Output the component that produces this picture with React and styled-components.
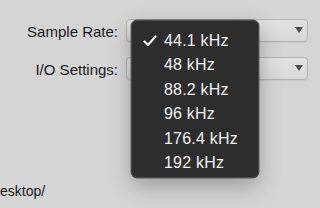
import React from "react";
import styled, { createGlobalStyle } from "styled-components";

const Global = createGlobalStyle`
  html, body { margin: 0; padding: 0; }
  body {
    background: #d5d5d5;
    font-family: "Liberation Sans", Arial, Helvetica, sans-serif;
    overflow: hidden;
  }
`;

const Page = styled.div`
  position: relative;
  width: 320px;
  height: 208px;
  box-sizing: border-box;
  padding: 19px 12px 0 0;
`;

const Form = styled.div`
  display: grid;
  grid-template-columns: 118px 1fr;
  column-gap: 8px;
  row-gap: 15px;
`;

const Label = styled.div`
  text-align: right;
  font-size: 15px;
  line-height: 23px;
  padding-top: 1px;
  height: 23px;
  box-sizing: border-box;
  color: #1a1a1a;
  white-space: nowrap;
`;

const Select = styled.div`
  height: 23px;
  box-sizing: border-box;
  border: 1px solid #b3b3b3;
  border-radius: 4px;
  background: linear-gradient(#e2e2e2, #d8d8d8);
  box-shadow: 0 1px 0 rgba(0, 0, 0, 0.06);
  display: flex;
  align-items: center;
  justify-content: flex-end;
  padding-right: 4px;
`;

const Arrow = styled.span`
  width: 0;
  height: 0;
  border-left: 4.5px solid transparent;
  border-right: 4.5px solid transparent;
  border-top: 6px solid #4d4d4d;
  margin-bottom: 2px;
`;

const PathText = styled.div`
  margin-top: 103px;
  font-size: 14px;
  line-height: 17px;
  color: #1a1a1a;
`;

const Menu = styled.ul`
  position: absolute;
  left: 131px;
  top: 20px;
  width: 128px;
  height: 158px;
  box-sizing: border-box;
  margin: 0;
  padding: 8px 0 3px;
  list-style: none;
  background: #2d2d2d;
  border: 1px solid #4b4b4b;
  border-radius: 6px;
  box-shadow: 0 0 0 0.5px rgba(0, 0, 0, 0.5), 0 8px 22px rgba(0, 0, 0, 0.28);
`;

const Item = styled.li`
  position: relative;
  height: 24.4px;
  line-height: 24.4px;
  padding-left: 32px;
  font-size: 16px;
  letter-spacing: 0.2px;
  color: #f2f2f2;
  white-space: nowrap;
`;

const Check = styled.svg`
  position: absolute;
  left: 11px;
  top: 6px;
`;

const rates = ["44.1 kHz", "48 kHz", "88.2 kHz", "96 kHz", "176.4 kHz", "192 kHz"];

export default function App() {
  return (
    <>
      <Global />
      <Page>
        <Form>
          <Label>Sample Rate:</Label>
          <Select>
            <Arrow />
          </Select>
          <Label>I/O Settings:</Label>
          <Select>
            <Arrow />
          </Select>
        </Form>
        <PathText>esktop/</PathText>
        <Menu>
          {rates.map((r, i) => (
            <Item key={r}>
              {i === 0 && (
                <Check width="14" height="12" viewBox="0 0 14 12">
                  <path d="M1.5 6.5 L5 10 L12.5 1.5" fill="none" stroke="#f2f2f2" strokeWidth="2.2" strokeLinecap="round" strokeLinejoin="round" />
                </Check>
              )}
              {r}
            </Item>
          ))}
        </Menu>
      </Page>
    </>
  );
}
